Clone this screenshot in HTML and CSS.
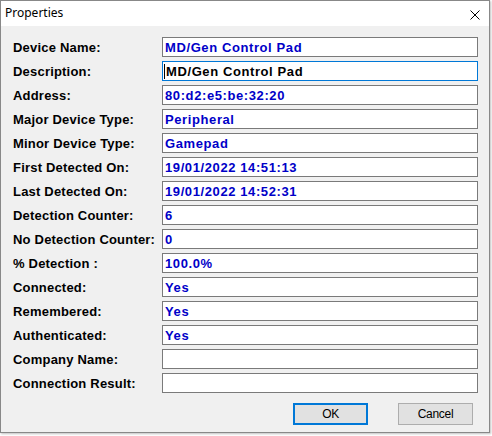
FILE: index.html
```html
<!DOCTYPE html>
<html>
<head>
<meta charset="utf-8">
<title>Properties</title>
<link rel="stylesheet" href="styles.css">
</head>
<body>
<div class="window">
  <div class="titlebar">
    <span class="title">Properties</span>
    <svg class="close" width="10" height="10" viewBox="0 0 10 10"><path d="M0.5 0.5 L9.5 9.5 M9.5 0.5 L0.5 9.5" stroke="#000" stroke-width="1" fill="none"/></svg>
  </div>
  <div class="content">
    <div class="form">
      <div class="label">Device Name:</div><div class="field">MD/Gen Control Pad</div>
      <div class="label">Description:</div><div class="field focused"><span class="caret"></span>MD/Gen Control Pad</div>
      <div class="label">Address:</div><div class="field">80:d2:e5:be:32:20</div>
      <div class="label">Major Device Type:</div><div class="field">Peripheral</div>
      <div class="label">Minor Device Type:</div><div class="field">Gamepad</div>
      <div class="label">First Detected On:</div><div class="field">19/01/2022 14:51:13</div>
      <div class="label">Last Detected On:</div><div class="field">19/01/2022 14:52:31</div>
      <div class="label">Detection Counter:</div><div class="field">6</div>
      <div class="label">No Detection Counter:</div><div class="field">0</div>
      <div class="label">% Detection :</div><div class="field">100.0%</div>
      <div class="label">Connected:</div><div class="field">Yes</div>
      <div class="label">Remembered:</div><div class="field">Yes</div>
      <div class="label">Authenticated:</div><div class="field">Yes</div>
      <div class="label">Company Name:</div><div class="field"></div>
      <div class="label">Connection Result:</div><div class="field"></div>
    </div>
    <div class="buttons">
      <button class="btn default">OK</button>
      <button class="btn">Cancel</button>
    </div>
  </div>
</div>
</body>
</html>
```
FILE: styles.css
```css
html, body {
  margin: 0;
  padding: 0;
  background: #ffffff;
}
body {
  width: 492px;
  height: 436px;
  overflow: hidden;
}
.window {
  width: 488px;
  height: 431px;
  border: 1px solid #888888;
  background: #f0f0f0;
  box-shadow: 1px 1px 2px rgba(0,0,0,0.25);
  display: flex;
  flex-direction: column;
}
.titlebar {
  height: 25px;
  background: #ffffff;
  display: flex;
  align-items: center;
  justify-content: space-between;
  padding: 0 9px 0 4px;
}
.title {
  font-family: "Noto Sans", "Open Sans", sans-serif;
  font-size: 12px;
  color: #000;
  margin-top: -2px;
}
.close {
  display: block;
  margin-top: 2px;
}
.content {
  padding: 11px 16px 0 11px;
  display: flex;
  flex-direction: column;
}
.form {
  display: grid;
  grid-template-columns: 150px 316px;
  grid-auto-rows: 20px;
  row-gap: 4px;
}
.label {
  font-family: "Liberation Sans", Arial, sans-serif;
  font-weight: bold;
  font-size: 13px;
  letter-spacing: 0.2px;
  color: #000;
  display: flex;
  align-items: center;
  padding-left: 1px;
}
.field {
  box-sizing: border-box;
  border: 1px solid #7a7a7a;
  background: #ffffff;
  font-family: "Liberation Sans", Arial, sans-serif;
  font-weight: bold;
  font-size: 13px;
  letter-spacing: 0.6px;
  color: #0000c8;
  padding-left: 2px;
  display: flex;
  align-items: center;
  white-space: nowrap;
  overflow: hidden;
}
.field.focused {
  border-color: #0078d7;
  color: #000;
  padding-left: 1px;
}
.caret {
  display: inline-block;
  width: 1px;
  height: 15px;
  background: #000;
  margin-right: 1px;
}
.buttons {
  display: flex;
  justify-content: flex-end;
  gap: 30px;
  margin-top: 10px;
}
.btn {
  box-sizing: border-box;
  width: 75px;
  height: 22px;
  margin: 0;
  padding: 0;
  background: #e1e1e1;
  border: 1px solid #adadad;
  font-family: "Liberation Sans", Arial, sans-serif;
  font-size: 12px;
  letter-spacing: -0.3px;
  color: #000;
}
.btn.default {
  border: 2px solid #0078d7;
}
```
